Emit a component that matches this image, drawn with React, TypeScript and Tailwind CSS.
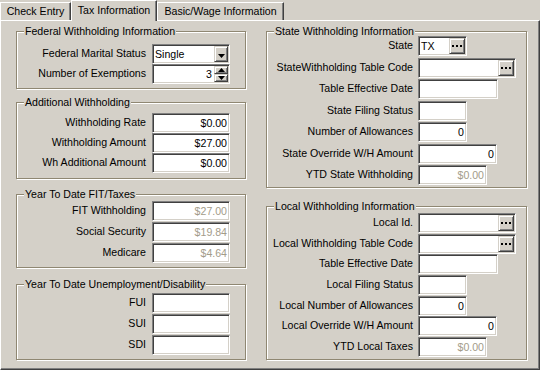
import type { ReactNode } from 'react'

// classic win2k edit box: dark top/left, light bottom/right
const SUNKEN =
  'flex items-stretch h-[20px] p-px bg-white border border-t-[#808080] border-l-[#808080] border-b-white border-r-white shadow-[inset_1px_1px_0_#404040,inset_-1px_-1px_0_#d4d0c8]'
const RAISED =
  'flex items-center justify-center bg-[#d4d0c8] border border-t-[#d4d0c8] border-l-[#d4d0c8] border-r-[#404040] border-b-[#404040] shadow-[inset_1px_1px_0_#fff,inset_-1px_-1px_0_#808080]'

function Dots() {
  return (
    <svg width="10" height="2" viewBox="0 0 10 2">
      <rect x="0" y="0" width="2" height="2" fill="#000" />
      <rect x="4" y="0" width="2" height="2" fill="#000" />
      <rect x="8" y="0" width="2" height="2" fill="#000" />
    </svg>
  )
}

function Field({
  w,
  value = '',
  left,
  disabled,
  ellipsis,
}: {
  w: string
  value?: string
  left?: boolean
  disabled?: boolean
  ellipsis?: boolean
}) {
  return (
    <div className={`${SUNKEN} ${w}`}>
      <span
        className={`flex-1 leading-[16px] whitespace-nowrap ${left ? 'text-left pl-px' : 'text-right pr-px'} ${
          disabled ? 'text-[#a39c8a]' : 'text-black'
        }`}
      >
        {value}
      </span>
      {ellipsis && (
        <div className={`${RAISED} w-[16px] h-[16px]`}>
          <Dots />
        </div>
      )}
    </div>
  )
}

function Combo() {
  return (
    <div className={`${SUNKEN} w-[78px]`}>
      <span className="flex-1 pl-px leading-[16px]">Single</span>
      <div className={`${RAISED} w-[14px] h-[16px]`}>
        <svg width="7" height="4" viewBox="0 0 7 4" className="mt-[3px]">
          <polygon points="0,0 7,0 3.5,4" fill="#000" />
        </svg>
      </div>
    </div>
  )
}

function Spinner() {
  return (
    <div className={`${SUNKEN} w-[78px]`}>
      <span className="flex-1 text-right pr-[2px] leading-[16px]">3</span>
      <div className="flex flex-col w-[14px]">
        <div className={`${RAISED} h-[8px]`}>
          <svg width="7" height="4" viewBox="0 0 7 4">
            <polygon points="0,4 7,4 3.5,0" fill="#000" />
          </svg>
        </div>
        <div className={`${RAISED} h-[8px]`}>
          <svg width="7" height="4" viewBox="0 0 7 4">
            <polygon points="0,0 7,0 3.5,4" fill="#000" />
          </svg>
        </div>
      </div>
    </div>
  )
}

function Group({ title, className, children }: { title: string; className: string; children: ReactNode }) {
  return (
    <div
      className={`relative flex flex-col border border-[#8f8772] shadow-[inset_1px_1px_0_#fff,1px_1px_0_#fff] ${className}`}
    >
      <span className="absolute left-[7px] top-[-7px] px-px leading-[13px] bg-[#d4d0c8]">{title}</span>
      {children}
    </div>
  )
}

function LRow({ label, children }: { label: string; children: ReactNode }) {
  return (
    <div className="flex items-center gap-[6px] h-[20px]">
      <div className="w-[129px] flex justify-end whitespace-nowrap">{label}</div>
      {children}
    </div>
  )
}

function RRow({ label, children }: { label: string; children: ReactNode }) {
  return (
    <div className="flex items-center gap-[5px] h-[20px]">
      <div className="w-[146px] flex justify-end whitespace-nowrap">{label}</div>
      {children}
    </div>
  )
}

const TAB =
  'flex justify-center border-t border-l border-r border-t-white border-l-white border-r-[#404040] shadow-[inset_-1px_0_0_#808080] bg-[#d4d0c8]'

export default function App() {
  return (
    <div className="w-[540px] h-[370px] bg-[#d4d0c8] flex flex-col font-['Liberation_Sans',Arial,sans-serif] text-[10.6px] text-black select-none">
      {/* tabs */}
      <div className="relative z-10 flex items-end h-[20px]">
        <div className={`${TAB} w-[71px] h-[18px] items-center`}>Check Entry</div>
        <div className={`${TAB} w-[86px] h-[21px] -mb-px pt-[2px]`}>Tax Information</div>
        <div className={`${TAB} w-[127px] h-[18px] items-center`}>Basic/Wage Information</div>
      </div>

      {/* page */}
      <div className="flex-1 flex gap-[20px] pl-[15px] pt-[10px] border-t border-l border-r border-b border-t-white border-l-white border-r-[#404040] border-b-[#404040] shadow-[inset_-1px_-1px_0_#808080]">
        <div className="flex flex-col w-[230px]">
          <Group title="Federal Withholding Information" className="h-[58px] pt-[12px]">
            <LRow label="Federal Marital Status">
              <Combo />
            </LRow>
            <LRow label="Number of Exemptions">
              <Spinner />
            </LRow>
          </Group>

          <Group title="Additional Withholding" className="h-[77px] mt-[13px] pt-[10px]">
            <LRow label="Withholding Rate">
              <Field w="w-[78px]" value="$0.00" />
            </LRow>
            <LRow label="Withholding Amount">
              <Field w="w-[78px]" value="$27.00" />
            </LRow>
            <LRow label="Wh Additional Amount">
              <Field w="w-[78px]" value="$0.00" />
            </LRow>
          </Group>

          <Group title="Year To Date FIT/Taxes" className="h-[74px] mt-[15px] pt-[6px] gap-px">
            <LRow label="FIT Withholding">
              <Field w="w-[78px]" value="$27.00" disabled />
            </LRow>
            <LRow label="Social Security">
              <Field w="w-[78px]" value="$19.84" disabled />
            </LRow>
            <LRow label="Medicare">
              <Field w="w-[78px]" value="$4.64" disabled />
            </LRow>
          </Group>

          <Group title="Year To Date Unemployment/Disability" className="h-[76px] mt-[16px] pt-[8px] gap-px">
            <LRow label="FUI">
              <Field w="w-[78px]" />
            </LRow>
            <LRow label="SUI">
              <Field w="w-[78px]" />
            </LRow>
            <LRow label="SDI">
              <Field w="w-[78px]" />
            </LRow>
          </Group>
        </div>

        <div className="flex flex-col w-[261px]">
          <Group title="State Withholding Information" className="h-[157px] pt-[4px] gap-[1.5px]">
            <RRow label="State">
              <Field w="w-[49px]" value="TX" left ellipsis />
            </RRow>
            <RRow label="StateWithholding Table Code">
              <Field w="w-[98px]" left ellipsis />
            </RRow>
            <RRow label="Table Effective Date">
              <Field w="w-[80px]" />
            </RRow>
            <RRow label="State Filing Status">
              <Field w="w-[49px]" />
            </RRow>
            <RRow label="Number of Allowances">
              <Field w="w-[49px]" value="0" />
            </RRow>
            <RRow label="State Override W/H Amount">
              <Field w="w-[79px]" value="0" />
            </RRow>
            <RRow label="YTD State Withholding">
              <Field w="w-[69px]" value="$0.00" disabled />
            </RRow>
          </Group>

          <Group title="Local Withholding Information" className="h-[154px] mt-[18px] pt-[6px] gap-[0.67px]">
            <RRow label="Local Id.">
              <Field w="w-[98px]" left ellipsis />
            </RRow>
            <RRow label="Local Withholding Table Code">
              <Field w="w-[98px]" left ellipsis />
            </RRow>
            <RRow label="Table Effective Date">
              <Field w="w-[80px]" />
            </RRow>
            <RRow label="Local Filing Status">
              <Field w="w-[49px]" />
            </RRow>
            <RRow label="Local Number of Allowances">
              <Field w="w-[49px]" value="0" />
            </RRow>
            <RRow label="Local Override W/H Amount">
              <Field w="w-[79px]" value="0" />
            </RRow>
            <RRow label="YTD Local Taxes">
              <Field w="w-[69px]" value="$0.00" disabled />
            </RRow>
          </Group>
        </div>
      </div>
    </div>
  )
}
